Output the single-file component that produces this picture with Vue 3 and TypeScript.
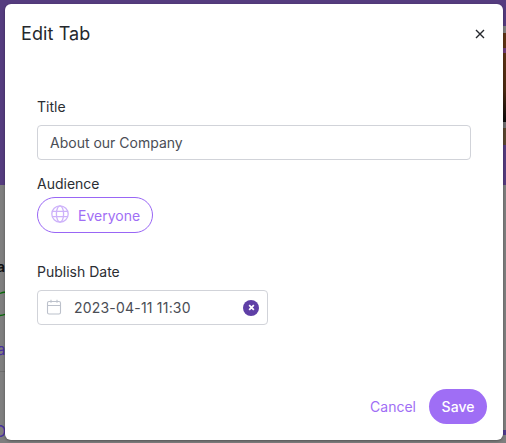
<script setup lang="ts">
const title = 'About our Company'
const date = '2023-04-11 11:30'
</script>

<template>
  <div class="page">
    <div class="backdrop" aria-hidden="true">
      <div class="hero">
        <div class="photo">
          <i class="p-gray"></i><i class="p-brown"></i><i class="p-purple"></i><i class="p-dark"></i><i class="p-gray2"></i><i class="p-brown2"></i>
        </div>
      </div>
      <span class="s-a">a</span>
      <svg class="s-ring" viewBox="0 0 6 26" width="6" height="26"><path d="M0 2.5Q2 1.4 6 1M0 24.5Q2 24.2 6 23" /></svg>
      <span class="s-b">a</span><span class="s-line"></span><span class="s-c">O</span><span class="s-d"></span>
    </div>
    <section class="modal">
      <header class="head">
        <h2>Edit Tab</h2>
        <svg class="close" viewBox="0 0 10 10" width="10" height="10"><path d="M1 1l8 8M9 1l-8 8" /></svg>
      </header>
      <div class="body">
        <label class="lab">Title</label>
        <div class="field title">{{ title }}</div>
        <label class="lab aud">Audience</label>
        <div class="pill">
          <svg viewBox="0 0 18 18" width="18" height="18" class="globe">
            <circle cx="9" cy="9" r="8.2" /><ellipse cx="9" cy="9" rx="3.6" ry="8.2" /><path d="M1.6 6.3h14.8M1.6 11.7h14.8" />
          </svg>
          <span>Everyone</span>
        </div>
        <label class="lab pub">Publish Date</label>
        <div class="field date">
          <svg class="cal" viewBox="0 0 16 16" width="16" height="16">
            <rect x="1.5" y="2.5" width="13" height="12.5" rx="1.5" /><path d="M1.5 6.5h13M5 .8v3M11 .8v3" />
          </svg>
          <span class="dv">{{ date }}</span>
          <span class="clear"><svg viewBox="0 0 6 6" width="7" height="7"><path d="M1 1l4 4M5 1L1 5" /></svg></span>
        </div>
      </div>
      <footer class="foot">
        <span class="cancel">Cancel</span>
        <span class="save">Save</span>
      </footer>
    </section>
  </div>
</template>

<style>
html, body { margin: 0; background: #7f7f7f; }
</style>

<style scoped>
.page { position: relative; width: 506px; height: 443px; overflow: hidden; padding: 4px 3px 3px 5px; box-sizing: border-box; font-family: Inter, "Liberation Sans", sans-serif; }
.backdrop { position: absolute; inset: 0; background: #7f7f7f; }
.hero { position: relative; height: 185px; background: #553c7f; }
.photo { position: absolute; right: 0; top: 26px; width: 3px; display: flex; flex-direction: column; }
.photo i { display: block; }
.p-gray { height: 7px; background: #7f7f7f; }
.p-brown { height: 15px; background: #5e3415; }
.p-purple { height: 5px; background: #6d3c78; }
.p-dark { height: 69px; background: linear-gradient(#5e3415, #4a2a12 55%, #0b0b0b); }
.p-gray2 { height: 6px; background: #6f6f6f; }
.p-brown2 { height: 17px; background: #5a4630; }
.s-a, .s-b, .s-c, .s-ring, .s-line, .s-d { position: absolute; }
.s-a { left: -3px; top: 258px; font-size: 14px; font-weight: 600; color: #111; }
.s-b { left: -3px; top: 340px; font-size: 15px; color: #4a30a0; }
.s-c { left: -6px; top: 421px; font-size: 16px; color: #4a30a0; }
.s-ring { left: 0; top: 291px; fill: none; stroke: #0a6a0a; stroke-width: 1.3; }
.s-line { left: 0; top: 371px; width: 6px; height: 1px; background: #6f6f6f; }
.s-d { right: 0; top: 430px; width: 3px; height: 5px; background: #4f3a8c; }
.modal { position: relative; width: 498px; height: 436px; background: #fff; border-radius: 6px; box-shadow: 0 1px 3px rgba(0, 0, 0, .35); display: flex; flex-direction: column; color: #25282d; }
.head { display: flex; justify-content: space-between; align-items: center; padding: 17px 18px 0 16px; height: 26px; }
h2 { margin: 0; font-size: 18px; font-weight: 400; line-height: 26px; letter-spacing: .1px; }
.close { fill: none; stroke: #25282d; stroke-width: 1.4; }
.body { padding: 50px 32px 0; display: flex; flex-direction: column; align-items: flex-start; flex: 1; }
.lab { font-size: 14px; line-height: 20px; color: #2b2e33; }
.field { box-sizing: border-box; border: 1px solid #d1d3d9; border-radius: 4px; font-size: 14px; color: #4a4d55; background: #fff; }
.title { margin-top: 8px; width: 434px; height: 35px; line-height: 33px; padding-left: 12px; }
.aud { margin-top: 14px; }
.pill { margin-top: 3px; box-sizing: border-box; height: 36px; width: 116px; border: 1px solid #9966f5; border-radius: 18px; display: flex; align-items: center; gap: 9px; padding-left: 13px; color: #9f6ef5; font-size: 14px; }
.globe { fill: none; stroke: #cdb2fa; stroke-width: 1.3; margin-top: -2px; }
.pub { margin-top: 29px; }
.date { margin-top: 8px; width: 231px; height: 35px; display: flex; align-items: center; padding: 0 8px 0 8px; }
.cal { fill: none; stroke: #bcc1cb; stroke-width: 1.1; margin-top: -1px; }
.dv { margin-left: 12px; flex: 1; letter-spacing: .2px; }
.clear { width: 16px; height: 16px; border-radius: 50%; background: #5f3fa6; display: flex; align-items: center; justify-content: center; }
.clear svg { fill: none; stroke: #fff; stroke-width: 1.5; }
.foot { display: flex; justify-content: flex-end; align-items: center; gap: 13px; padding: 0 16px 16px 0; font-size: 14px; }
.cancel { color: #9f6ef5; }
.save { box-sizing: border-box; width: 58px; height: 35px; line-height: 35px; text-align: center; border-radius: 18px; background: #9f6ef5; color: #fff; font-weight: 500; }
</style>
